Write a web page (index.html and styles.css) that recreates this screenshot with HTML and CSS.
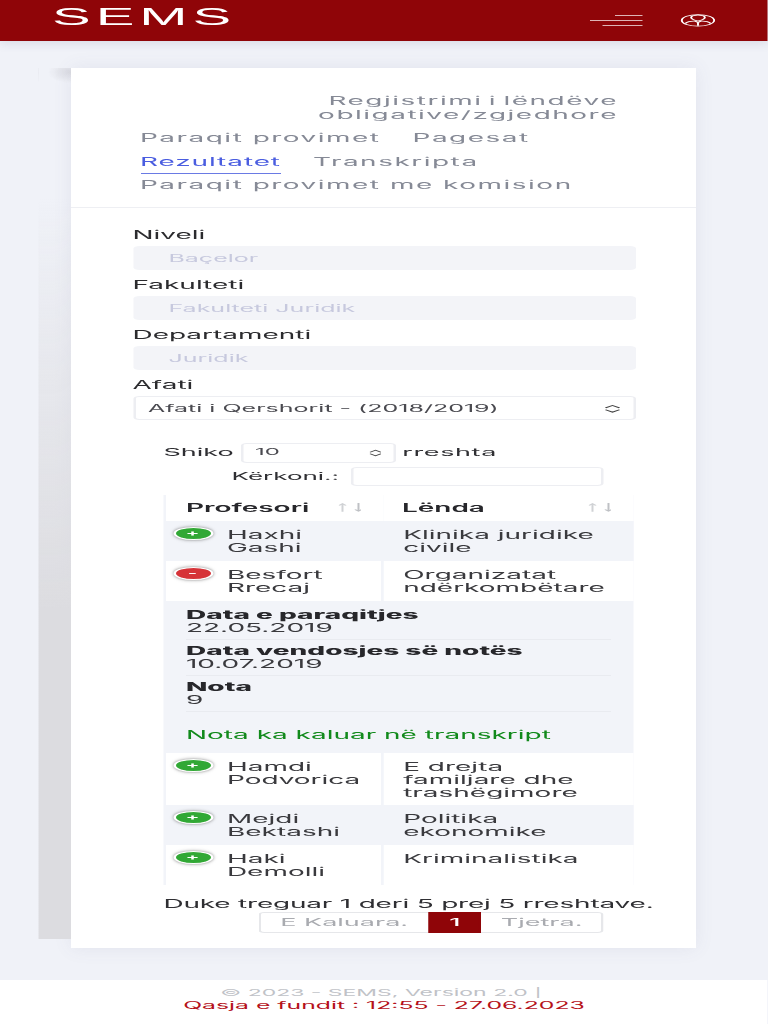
FILE: index.html
```html
<!DOCTYPE html>
<html lang="sq">
<head>
<meta charset="utf-8">
<title>SEMS</title>
<link rel="stylesheet" href="styles.css">
</head>
<body>
<div class="page">
  <header class="topbar">
    <div class="logo">SEMS</div>
    <div class="topbar-tools">
      <div class="burger"><span class="b1"></span><span class="b2"></span><span class="b3"></span></div>
      <svg class="avatar" viewBox="0 0 24 24" preserveAspectRatio="none" fill="none" stroke="#fff" stroke-width="1.3"><circle cx="12" cy="12" r="10.8"/><path d="M12 2c-2.800 0-4.600 2-4.600 4.400 0 2.600 2 4.800 4.600 6.600 2.600-1.800 4.600-4 4.600-6.600C16.600 4 14.800 2 12 2z"/><path d="M3.500 18c.8-3.400 3.800-5 6.200-4.600.9.200 1.700 1.400 2.300 3 .6-1.600 1.400-2.800 2.300-3 2.400-.4 5.400 1.200 6.200 4.600"/><path d="M12 16.500V22"/></svg>
    </div>
  </header>

  <main class="main">
    <section class="card">
      <nav class="tabs">
        <div class="tab-row tab-row-end"><a class="tab tab-wrap">Regjistrimi i lëndëve obligative/zgjedhore</a></div>
        <div class="tab-row"><a class="tab">Paraqit provimet</a><a class="tab">Pagesat</a></div>
        <div class="tab-row"><a class="tab tab-active">Rezultatet</a><a class="tab">Transkripta</a></div>
        <div class="tab-row"><a class="tab">Paraqit provimet me komision</a></div>
      </nav>

      <div class="body">
        <div class="group"><div class="label">Niveli</div><div class="field field-off">Baçelor</div></div>
        <div class="group"><div class="label">Fakulteti</div><div class="field field-off">Fakulteti Juridik</div></div>
        <div class="group"><div class="label">Departamenti</div><div class="field field-off">Juridik</div></div>
        <div class="group"><div class="label">Afati</div>
          <div class="field field-select"><span>Afati i Qershorit - (2018/2019)</span>
            <svg class="updown" viewBox="0 0 9 12" preserveAspectRatio="none" fill="none" stroke="#444" stroke-width="1"><path d="M1 4.800 4.500 1.800 8 4.800M1 7.200 4.500 10.200 8 7.200"/></svg>
          </div>
        </div>

        <div class="dt">
          <div class="dt-length">
            <span class="dt-length-lead">Shiko</span>
            <div class="mini-select"><span>10</span>
              <svg class="updown updown-s" viewBox="0 0 9 12" preserveAspectRatio="none" fill="none" stroke="#444" stroke-width="1"><path d="M1 4.800 4.500 1.800 8 4.800M1 7.200 4.500 10.200 8 7.200"/></svg>
            </div>
            <span class="dt-length-tail">rreshta</span>
          </div>
          <div class="dt-search"><span>Kërkoni.:</span><div class="search-box"></div></div>

          <div class="table-wrap">
            <table class="grid">
              <thead>
                <tr>
                  <th class="col-a"><div class="th-in"><span>Profesori</span>
                    <svg class="sort" viewBox="0 0 12 11" fill="none" stroke-width="1"><path class="sort-up" d="M2 11V1M.3 3 2 .8 3.700 3"/><path class="sort-down" d="M10 0v10M8.300 8 10 10.200 11.700 8"/></svg></div></th>
                  <th class="col-b"><div class="th-in"><span>Lënda</span>
                    <svg class="sort" viewBox="0 0 12 11" fill="none" stroke-width="1"><path class="sort-up" d="M2 11V1M.3 3 2 .8 3.700 3"/><path class="sort-down" d="M10 0v10M8.300 8 10 10.200 11.700 8"/></svg></div></th>
                </tr>
              </thead>
              <tbody>
                <tr class="odd">
                  <td class="prof"><span class="toggle"></span>Haxhi<br>Gashi</td>
                  <td>Klinika juridike<br>civile</td>
                </tr>
                <tr class="even">
                  <td class="prof"><span class="toggle toggle-open"></span>Besfort<br>Rrecaj</td>
                  <td>Organizatat<br>ndërkombëtare</td>
                </tr>
                <tr class="detail">
                  <td colspan="2">
                    <dl class="facts">
                      <div class="fact"><dt>Data e paraqitjes</dt><dd>22.05.2019</dd></div>
                      <div class="fact"><dt>Data vendosjes së notës</dt><dd>10.07.2019</dd></div>
                      <div class="fact"><dt>Nota</dt><dd>9</dd></div>
                    </dl>
                    <div class="passed">Nota ka kaluar në transkript</div>
                  </td>
                </tr>
                <tr class="even">
                  <td class="prof"><span class="toggle"></span>Hamdi<br>Podvorica</td>
                  <td>E drejta<br>familjare dhe<br>trashëgimore</td>
                </tr>
                <tr class="odd">
                  <td class="prof"><span class="toggle"></span>Mejdi<br>Bektashi</td>
                  <td>Politika<br>ekonomike</td>
                </tr>
                <tr class="even">
                  <td class="prof"><span class="toggle"></span>Haki<br>Demolli</td>
                  <td>Kriminalistika</td>
                </tr>
              </tbody>
            </table>
          </div>

          <div class="dt-info">Duke treguar 1 deri 5 prej 5 rreshtave.</div>
          <div class="pager">
            <a class="pg pg-prev">E Kaluara.</a><a class="pg pg-cur">1</a><a class="pg pg-next">Tjetra.</a>
          </div>
        </div>
      </div>
    </section>
  </main>

  <footer class="foot">
    <div class="foot-copy">© 2023 - SEMS, Version 2.0 |</div>
    <div class="foot-last">Qasja e fundit : 12:55 - 27.06.2023</div>
  </footer>
</div>
</body>
</html>
```
FILE: styles.css
```css
html, body {
  margin: 0;
  padding: 0;
  height: 1024px;
  overflow: hidden;
  background: #f0f2f8;
}
* { box-sizing: border-box; }

/* The whole page is a narrow layout stretched to the window:
   zoom keeps its height at 1024px, the transform stretches its width. */
.page {
  zoom: 0.8;
  width: 384px;
  height: 1280px;
  transform: scaleX(2.5);
  transform-origin: 0 0;
  filter: blur(0.2px);
  font-family: Inter, "Noto Sans", "Liberation Sans", sans-serif;
  font-size: 14px;
  line-height: 16.25px;
  color: #3a3a3e;
  display: flex;
  flex-direction: column;
  overflow: hidden;
}

/* Top bar */
.topbar {
  flex: none;
  height: 51px;
  background: #8f0508;
  box-shadow: 0 2px 8px rgba(90, 90, 120, .18);
  display: flex;
  justify-content: space-between;
  padding: 0 26px 0 26px;
  position: relative;
  z-index: 2;
}
.logo {
  font-family: "Liberation Sans", Arial, sans-serif;
  font-size: 29px;
  line-height: 29px;
  letter-spacing: 2.5px;
  color: #fff;
  margin-top: 8px;
}
.topbar-tools { display: flex; align-items: flex-start; gap: 19px; }
.burger {
  width: 26.5px;
  margin-top: 18.5px;
  display: flex;
  flex-direction: column;
  align-items: flex-end;
  gap: 5.25px;
}
.burger span { display: block; height: 1.25px; background: rgba(255, 255, 255, .7); }
.b1 { width: 13.5px; }
.b2 { width: 26.5px; }
.b3 { width: 20px; }
.avatar { width: 18px; height: 16px; margin-top: 17.5px; }

/* Main */
.main { flex: none; height: 1174px; padding: 34px 0 0 35.5px; }
.card {
  position: relative;
  width: 312.5px;
  height: 1100px;
  background: #fff;
  box-shadow: 0 0 14px rgba(90, 90, 130, .09);
  transform: translateX(.5px);
}
.card::before {
  content: "";
  position: absolute;
  left: -16.5px;
  width: 16.5px;
  top: 0;
  bottom: 11px;
  z-index: -1;
  background:
    radial-gradient(ellipse 70% 14px at 100% 5px, rgba(195, 195, 203, .55), rgba(195, 195, 203, 0)),
    linear-gradient(to bottom, rgba(220, 220, 224, 0) 15%, rgba(220, 220, 224, .45) 35%, #dcdce0 62%, #dcdce0 100%);
}

/* Tabs */
.tabs {
  height: 175px;
  padding: 32px 39.5px 0 34px;
  border-bottom: 1px solid #eeeff3;
  color: #868a96;
}
.tab-row { display: flex; gap: 16px; }
.tab-row-end { justify-content: flex-end; height: 41.75px; }
.tab { display: block; height: 29.5px; line-height: 29px; letter-spacing: .75px; }
.tab-wrap {
  width: 154px;
  height: auto;
  line-height: 17.5px;
  text-align: right;
  word-spacing: -1.5px;
}
.tab-active {
  color: #4a5de0;
  height: 29px;
  margin-bottom: .5px;
  letter-spacing: .45px;
  border-bottom: 1px solid #6a7ae4;
}

/* Form */
.body { padding: 25px 30.5px 0 31.25px; }
.group { margin-bottom: 10px; }
.label { line-height: 18.5px; margin: 0 0 4px -1px; color: #2b2b2e; }
.field { height: 30px; line-height: 30.5px; border-radius: 3px; padding: 0 17px; font-size: 12.5px; }
.field-off { background: #f3f4f8; color: #c7c9de; }
.field-select {
  border: 1px solid #edeef2;
  background: #fff;
  padding: 1px 5.5px 0;
  display: flex;
  justify-content: space-between;
  align-items: center;
  color: #4a4a50;
}
.updown { width: 9px; height: 12px; flex: none; }
.updown-s { width: 7px; height: 10px; }

/* Data table */
.dt { padding-top: 18.5px; }
.dt-length {
  display: flex;
  align-items: center;
  gap: 4px;
  padding-left: 14.5px;
  height: 25px;
  line-height: 26px;
  color: #2f2f33;
  font-size: 13.5px;
}
.dt-length-lead { width: 34.5px; padding-top: 1.5px; }
.dt-length-tail { letter-spacing: .3px; padding-top: 1.5px; margin-left: -1px; }
.mini-select {
  width: 78px;
  height: 25px;
  border: 1px solid #edeef2;
  border-radius: 3px;
  padding: 0 6px;
  display: flex;
  align-items: center;
  justify-content: space-between;
  font-size: 12px;
  color: #4a4a50;
}
.dt-search {
  display: flex;
  align-items: center;
  justify-content: flex-end;
  gap: 6.5px;
  margin: 5px 16.5px 0 0;
  height: 24px;
  color: #2f2f33;
  font-size: 13px;
}
.search-box { width: 125.5px; height: 24px; border: 1px solid #edeef2; border-radius: 3px; background: #fff; }

.table-wrap {
  margin: 11px 0 0 15px;
  width: 235px;
  background: #f2f4f9;
  padding: 0 1px;
}
.grid { width: 100%; border-collapse: collapse; table-layout: fixed; }
.grid th {
  background: #fff;
  height: 32.5px;
  padding: 2px 10.5px 0 9.75px;
  text-align: left;
  font-weight: 600;
  color: #27272b;
}
.th-in { display: flex; justify-content: space-between; align-items: center; }
.col-a { width: 108px; }
.sort { width: 12px; height: 11px; flex: none; margin-top: -2px; }
.sort-up { stroke: #d0d2d5; }
.sort-down { stroke: #bfc1c5; }
.grid td { padding: 10px 8px 6.25px 9.75px; vertical-align: top; }
.odd td { background: #f2f4f9; }
.even td { background: #fff; }
.even td:first-child, .odd td:first-child { border-right: 1px solid #f2f4f9; }
.grid td.prof { position: relative; padding-left: 30.25px; padding-bottom: 7.5px; }
.toggle {
  position: absolute;
  left: 3px;
  top: 7.5px;
  width: 20px;
  height: 16px;
  border-radius: 50%;
  background: #31a835;
  border: 2px solid #fff;
  box-shadow: 0 0 2.5px rgba(60, 60, 60, .65);
  display: flex;
  align-items: center;
  justify-content: center;
  color: #fff;
  font-size: 10px;
  line-height: 1;
  font-weight: 700;
}
.toggle::before { content: "+"; }
.toggle-open { background: #d63338; }
.toggle-open::before { content: "-"; }

.grid .detail td { padding: 10.5px 10.5px 13.25px 9.75px; background: transparent; }
.facts { margin: 0; }
.fact { border-bottom: 1px solid #e9ebf0; padding-bottom: 5.5px; margin-bottom: 5.5px; }
.fact dt { font-weight: 800; color: #27272b; }
.fact dd { margin: 0; color: #3a3a3e; }
.passed { margin-top: 21.5px; color: #128a1c; }

.dt-info { margin: 16.25px 0 0 14.5px; white-space: nowrap; color: #2f2f33; letter-spacing: -.1px; }
.pager { display: flex; margin: 1.5px 0 0 61.5px; height: 26px; line-height: 24.5px; color: #a9abb0; font-size: 13.5px; }
.pg { display: block; border: 1px solid #e6e7ea; text-align: center; }
.pg-prev { width: 85.5px; border-right: 0; border-radius: 3px 0 0 3px; }
.pg-cur { width: 26.5px; background: #8f0508; border-color: #8f0508; color: #fff; font-weight: 500; }
.pg-next { width: 61.5px; border-left: 0; border-radius: 0 3px 3px 0; }

/* Footer */
.foot {
  flex: none;
  height: 55px;
  background: #fff;
  text-align: center;
  padding-top: 9px;
  line-height: 15px;
}
.foot-copy { color: #c0c2c7; font-size: 11.5px; padding-right: 3px; }
.foot-last { color: #b5111a; font-size: 12.4px; }
```
